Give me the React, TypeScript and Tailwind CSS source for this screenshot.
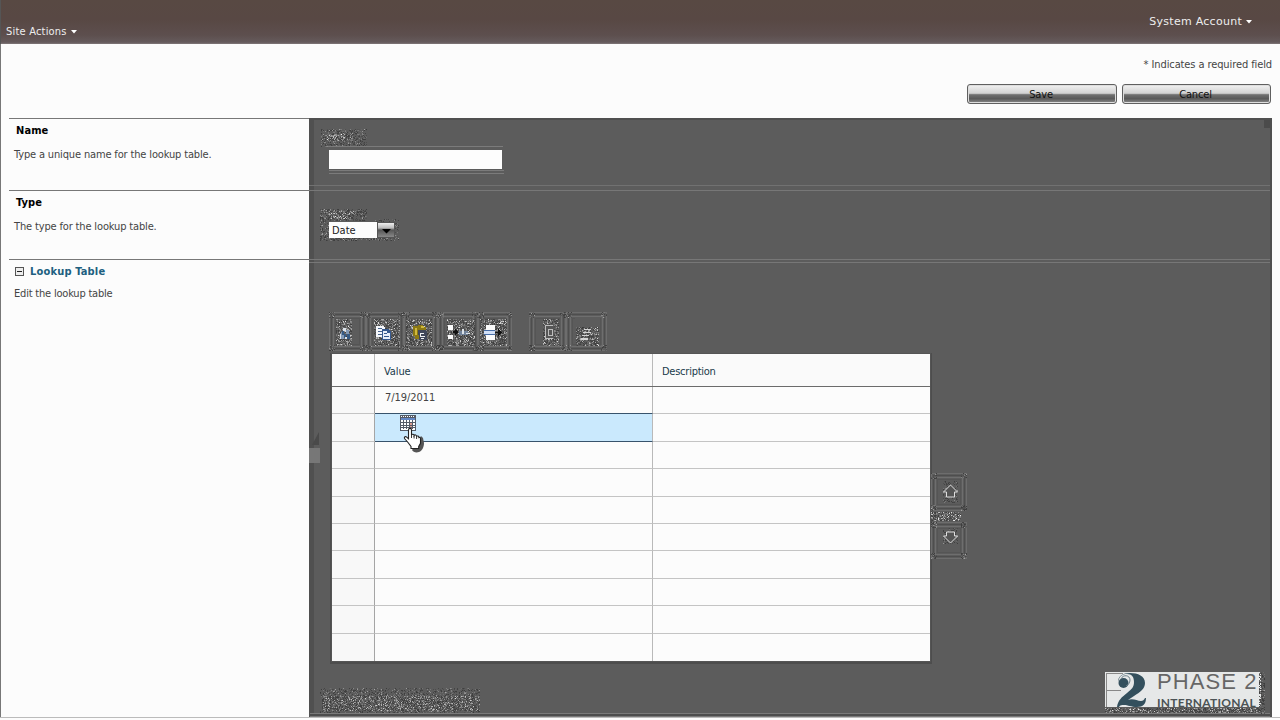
import type { ReactNode } from "react";
import clsx from "clsx";

const ROW_HEIGHTS = [
  "h-[27px]",
  "h-[28px]",
  "h-[27px]",
  "h-[28px]",
  "h-[27px]",
  "h-[27px]",
  "h-[28px]",
  "h-[27px]",
  "h-[28px]",
  "h-[27px]",
];

interface SpeckleProps {
  width: number;
  height: number;
  seed: number;
  density?: number;
  max?: number;
  className?: string;
}

// Grainy patch, same dots on every render
function Speckle({ width, height, seed, density = 0.6, max = 170, className }: SpeckleProps) {
  let s = seed * 7919 + 17;
  const next = () => {
    s = (s * 1103515245 + 12345) % 2147483648;
    return s / 2147483648;
  };
  const dots: ReactNode[] = [];
  for (let y = 0; y < height; y++) {
    for (let x = 0; x < width; x++) {
      if (next() > density) continue;
      const v = Math.round(50 + next() * next() * (max - 50) + 10);
      dots.push(<rect key={`${x}-${y}`} x={x} y={y} width="1" height="1" fill={`rgb(${v},${v},${v})`} />);
    }
  }
  return (
    <svg width={width} height={height} shapeRendering="crispEdges" className={clsx("absolute", className)}>
      {dots}
    </svg>
  );
}

function FrameLines({ w, h }: { w: number; h: number }) {
  return (
    <svg width={w} height={h} className="absolute left-0 top-0" fill="none" shapeRendering="crispEdges">
      <rect x="0.5" y="0.5" width={w - 1} height={h - 1} stroke="#6d6d6d" />
      <rect x="2.5" y="2.5" width={w - 5} height={h - 5} stroke="#4e4e4e" />
      <rect x="4.5" y="4.5" width={w - 9} height={h - 9} stroke="#6e6e6e" />
      <rect x="6.5" y="6.5" width={w - 13} height={h - 13} stroke="#555" />
    </svg>
  );
}

function Corners({ seed }: { seed: number }) {
  return (
    <>
      <Speckle width={6} height={6} seed={seed} className="left-0 top-0" />
      <Speckle width={6} height={6} seed={seed + 1} className="right-0 top-0" />
      <Speckle width={6} height={6} seed={seed + 2} className="bottom-0 left-0" />
      <Speckle width={6} height={6} seed={seed + 3} className="bottom-0 right-0" />
    </>
  );
}

interface ToolButtonProps {
  width: number;
  className: string;
  seed: number;
  grain: string;
  grainWidth: number;
  children: ReactNode;
}

function ToolButton({ width, className, seed, grain, grainWidth, children }: ToolButtonProps) {
  return (
    <button className={clsx("relative h-[39px] shrink-0", className)}>
      <FrameLines w={width} h={39} />
      <Corners seed={seed} />
      <Speckle width={grainWidth} height={27} seed={seed + 5} density={0.8} max={230} className={grain} />
      <svg width={width} height="39" className="absolute -top-px left-0" shapeRendering="crispEdges">
        {children}
      </svg>
    </button>
  );
}

function Toolbar() {
  return (
    <div className="flex h-[39px] pl-[20px]">
      <ToolButton width={37} className="w-[37px]" seed={1} grain="left-[7px] top-[7px]" grainWidth={16}>
        <path d="M12 21h3v7h-3zM17 19h3v4h-3z" fill="#8299b5" />
        <path d="M13 20h2v3h2v4h-2v-3h-2zM18 23h3v5h-3z" fill="#365a83" />
        <path d="M14 17h3v3h-3zM11 23h1v5h-1zM16 26h2v2h-2z" fill="#dce3ea" />
      </ToolButton>
      <ToolButton width={38} className="w-[38px]" seed={11} grain="left-[8px] top-[7px]" grainWidth={26}>
        <path d="M10 15h7l2 2v9h-9z" fill="#f5f7fb" />
        <path d="M12 17h4v1h-4zM12 20h5v1h-5zM12 23h5v1h-5z" fill="#49648c" />
        <path d="M16 18h6l3 3v8h-9z" fill="#36598e" />
        <path d="M17 20h4v2h3v6h-7z" fill="#e6edf8" />
        <path d="M18 22h3v1h-3zM18 25h5v1h-5z" fill="#36598e" />
      </ToolButton>
      <ToolButton width={34} className="w-[34px]" seed={21} grain="left-[2px] top-[7px]" grainWidth={26}>
        <path d="M9 15h5v-1h5v2h3v3h-3v9h-8v-3h-2z" fill="#8b7814" />
        <path d="M11 17h2v7h-2zM17 15h3v2h-3z" fill="#d0b93d" />
        <path d="M14 19h7l2 2v8h-8z" fill="#3f475b" />
        <path d="M16 22h4v1h-3v2h4v1h-5zM17 27h3v1h-3z" fill="#eff2f5" />
      </ToolButton>
      <ToolButton width={40} className="w-[40px]" seed={31} grain="left-[9px] top-[7px]" grainWidth={28}>
        <path d="M10 14h5v5h-5zM10 24h5v4h-5z" fill="#fafafa" />
        <path d="M15 20h2v-2l4 3-4 3v-2h-2z" fill="#111" />
        <path d="M21 20h9v4h-9z" fill="#71839b" />
        <path d="M24 18h2v5h-2zM28 22h4v1h-4z" fill="#dce2e8" />
      </ToolButton>
      <ToolButton width={34} className="w-[34px]" seed={41} grain="left-[2px] top-[7px]" grainWidth={27}>
        <path d="M8 14h9v5H8zM8 24h9v5H8z" fill="#fafafa" />
        <path d="M6 20h11v3H6z" fill="#d2e0f7" />
        <path d="M6 19h11v1H6zM6 23h11v1H6z" fill="#476da6" />
        <path d="M17 21h3v-3l4 3-4 4v-3h-3z" fill="#111" />
      </ToolButton>
      <ToolButton width={37} className="ml-[17px] w-[37px]" seed={51} grain="left-[14px] top-[7px]" grainWidth={16}>
        <path d="M17 15h8v12h-9v-8h1z" fill="#565656" />
        <path d="M16 14h8v1h-8zM16 15h1v13h-1zM16 27h8v1h-8zM19 18h5v1h-5zM19 19h1v6h-1zM23 19h1v6h-1zM19 24h4v1h-4z" fill="#bebebe" />
      </ToolButton>
      <ToolButton width={41} className="w-[41px]" seed={61} grain="left-[10px] top-[7px]" grainWidth={23}>
        <path d="M9 7h25v9H9z" fill="#5c5c5c" />
        <path d="M18 18h7v1h-7zM17 21h8v1h-8zM16 24h7v1h-7zM15 27h7v2h-7z" fill="#d4d4d4" />
      </ToolButton>
    </div>
  );
}

function ValueGrid() {
  return (
    <div className="ml-[23px] flex h-[307px] w-[598px] flex-col bg-[#fcfcfc] shadow-[0_0_0_1px_#555,0_1px_0_2px_#4d4d4d]">
      <div className="flex h-[33px] shrink-0 border-b border-[#6b6b6b] bg-[#fafafa] text-[#203b4b]">
        <div className="w-[43px] border-r border-[#b9b9b9]" />
        <div className="w-[278px] border-r border-[#b9b9b9] pl-[9px] pt-[10px] leading-[16px]">
          <span className="tracking-[-0.1px]">Value</span>
        </div>
        <div className="pl-[9px] pt-[10px] leading-[16px] tracking-[-0.25px]">Description</div>
      </div>
      {ROW_HEIGHTS.map((height, i) => (
        <div key={i} className={clsx("flex shrink-0", height)}>
          <div
            className={clsx("w-[43px] border-r border-r-[#a5a5a5] bg-[#f8f8f8]", i < 9 && "border-b border-b-[#c4c4c4]")}
          />
          <div
            className={clsx(
              "relative w-[278px] border-r border-r-[#b9b9b9]",
              i < 9 && "border-b",
              i < 2 ? "border-b-[#38536c]" : "border-b-[#c4c4c4]",
              i === 1 && "bg-[#cae9fd]"
            )}
          >
            {i === 0 && <span className="block pl-[10px] pt-[3px] leading-[16px] tracking-[-0.05px]">7/19/2011</span>}
            {i === 1 && (
              <>
                <CalendarIcon />
                <HandCursor />
              </>
            )}
          </div>
          <div className={clsx("flex-1", i < 9 && "border-b border-[#c4c4c4]")} />
        </div>
      ))}
    </div>
  );
}

function CalendarIcon() {
  return (
    <svg width="16" height="16" className="absolute left-[25px] top-px" shapeRendering="crispEdges">
      <rect width="16" height="16" fill="#555b66" />
      <path d="M1 1h1v1H1zM3 1h1v1H3zM5 1h1v1H5zM7 1h1v1H7zM9 1h1v1H9zM11 1h1v1h-1zM13 1h1v1h-1z" fill="#fff" />
      <rect x="1" y="3" width="14" height="2" fill="#6488c5" />
      {[5, 8, 11, 13].map((y) =>
        [1, 4, 7, 10, 13].map((x) => (
          <rect key={`${x}-${y}`} x={x} y={y} width="2" height={y > 10 ? 1 : 2} fill={x === 10 && y > 7 ? "#dd9d91" : "#fff"} />
        ))
      )}
      <rect x="1" y="14" width="14" height="1" fill="#fff" />
    </svg>
  );
}

function HandCursor() {
  return (
    <svg width="24" height="28" viewBox="0 0 24 28" className="absolute left-[28px] top-[13px] z-10">
      <path d="M9 23l9-14 2 2 1 5c0 4-2 8-5 9-3 1-6 0-7-2z" fill="#555" />
      <path
        d="M5.500 3c0-2.200 3-2.200 3 0v5c.4-1.200 2.600-.9 2.600.5.600-1 2.500-.6 2.500.8.800-.7 2.300-.2 2.300 1.200.8-.4 1.600.2 1.600 1.300v4.500l-1.800 3.200v2H8v-2L5 15.500l-3.500-4c-.6-1.600 1-2.500 2.200-1.400l1.800 1.700z"
        fill="#fff"
        stroke="#222"
        strokeWidth="1.1"
      />
      <path d="M8.500 8v3M11.100 9v2.500M13.600 10v2" stroke="#222" strokeWidth="0.9" fill="none" />
    </svg>
  );
}

function MoveButtons() {
  return (
    <div className="ml-px mt-[119px] flex w-[36px] flex-col">
      <button className="relative h-[38px]">
        <FrameLines w={36} h={38} />
        <Corners seed={71} />
        <Speckle width={15} height={22} seed={75} density={0.4} className="left-[12px] top-[8px]" />
        <svg width="36" height="38" className="absolute left-0 top-0">
          <path d="M19.500 12l7 7h-3v5h-8v-5h-3z" fill="#555" stroke="#dedede" />
        </svg>
      </button>
      <div className="relative h-[11px]">
        <Speckle width={30} height={9} seed={80} density={0.9} max={255} className="left-0 top-px" />
      </div>
      <button className="relative h-[37px]">
        <FrameLines w={36} h={37} />
        <Corners seed={81} />
        <Speckle width={15} height={16} seed={85} density={0.4} className="left-[12px] top-[6px]" />
        <svg width="36" height="37" className="absolute left-0 top-0">
          <path d="M15.500 10h8v4h3l-7 7-7-7h3z" fill="#555" stroke="#dedede" />
        </svg>
      </button>
    </div>
  );
}

function Brand() {
  return (
    <div className="absolute left-[1105px] top-[672px] flex h-[35px] w-[156px] bg-[#e6e8e8]">
      <svg width="46" height="36" className="shrink-0">
        <path d="M1.500 35V1.500M1 18.500h15M1 1.500h17" stroke="#888" fill="none" />
        <circle cx="18.500" cy="11" r="5" fill="#34505d" />
        <path
          d="M13 10C13 4 18 1 25 1c8 0 15 3 15 10 0 6-5 9-11 13l-6 4c5-2 9 1 13 1 2 0 3-1 4-3h1c0 6-3 9-9 9-6 0-9-2-13-2-2 0-4 0-5 2h-2c1-7 5-10 10-14 5-4 7-6 7-11 0-5-2-8-7-8-4 0-7 2-8 5z"
          fill="#34505d"
        />
        <path d="M16 7c2-5 9-4 9 1 0 3-2 5-4 6" stroke="#6b7e87" fill="none" />
      </svg>
      <Speckle width={6} height={42} seed={90} className="-right-[4px] top-0" />
      <Speckle width={154} height={5} seed={91} density={0.8} max={230} className="left-0 top-[36px]" />
      <div className="relative flex flex-col pl-[6px] font-['Liberation_Sans'] text-[#666]">
        <span className="h-[21px] whitespace-nowrap text-[22px] leading-[20px] tracking-[1.1px]">PHASE 2</span>
        <div className="h-px w-[101px] bg-[#888]" />
        <span className="mt-[4px] whitespace-nowrap font-['Lato'] text-[12px] font-bold leading-[13px] tracking-[0.25px] text-[#4b5355]">
          INTERNATIONAL
        </span>
      </div>
    </div>
  );
}

function Caret() {
  return (
    <svg width="7" height="4" className="ml-[4px]">
      <path d="M0 0h6L3 3.500z" fill="#fff" />
    </svg>
  );
}

function FormButton({ children, className }: { children: ReactNode; className: string }) {
  return (
    <button
      className={clsx(
        "flex h-[20px] items-center justify-center rounded-[3px] border border-[#606060] bg-[linear-gradient(#f2f2f2_0%,#d2d2d2_46%,#707070_54%,#595959_76%,#8c8c8c_100%)] pr-[2px] pt-[2px] text-[#111] shadow-[inset_0_0_0_1px_#dedede]",
        className
      )}
    >
      {children}
    </button>
  );
}

function Section({ title, text, className }: { title: string; text: string; className: string }) {
  return (
    <div className={clsx("ml-[8px] border-t border-[#777] pl-[5px]", className)}>
      <h3 className="pl-[2px] pt-[4px] text-[11px] font-bold leading-[16px] tracking-[0.1px] text-black">{title}</h3>
      <p className="pt-[8px] leading-[16px]">{text}</p>
    </div>
  );
}

export default function App() {
  return (
    <div className="relative flex h-[720px] w-[1280px] flex-col overflow-hidden bg-[#fcfcfc] font-['DejaVu_Sans_Condensed','DejaVu_Sans',sans-serif] text-[11px] tracking-[-0.15px] text-[#444] [font-stretch:condensed]">
      <header className="flex h-[44px] shrink-0 justify-between border-l border-[#555] bg-[linear-gradient(#584943_0%,#584844_45%,#5d4f4e_80%,#655a5c_96%,#81797a_100%)] text-[#eee]">
        <div className="flex items-center self-end pb-[4px] pl-[5px] leading-[16px] tracking-[0.2px]">
          Site Actions
          <Caret />
        </div>
        <div className="flex items-center self-start pr-[27px] pt-[14px] font-['DejaVu_Sans'] leading-[16px] tracking-[0.27px] [font-stretch:normal]">
          System Account
          <Caret />
        </div>
      </header>

      <div className="flex h-[74px] shrink-0 flex-col items-end border-l border-[#777] pr-[9px]">
        <p className="-mr-px mt-[13px] leading-[16px] tracking-[-0.1px]">* Indicates a required field</p>
        <div className="mt-[11px] flex gap-[5px]">
          <FormButton className="w-[150px]">Save</FormButton>
          <FormButton className="w-[149px]">Cancel</FormButton>
        </div>
      </div>

      <main className="flex h-[599px] shrink-0 border-l border-[#777] pr-[8px]">
        <aside className="flex w-[308px] shrink-0 flex-col">
          <Section title="Name" text="Type a unique name for the lookup table." className="h-[72px]" />
          <Section title="Type" text="The type for the lookup table." className="h-[69px]" />
          <div className="ml-[8px] border-t border-[#777] pl-[5px]">
            <h3 className="flex items-center pl-[1px] pt-[4px] text-[11px] font-bold leading-[16px] tracking-[0.17px] text-[#205f80]">
              <svg width="9" height="9" className="-mt-[2px] mr-[6px]" shapeRendering="crispEdges">
                <rect x="0.500" y="0.500" width="8" height="8" fill="#eee" stroke="#555" />
                <path d="M2 4h5v1H2z" fill="#222" />
              </svg>
              Lookup Table
            </h3>
            <p className="pt-[6px] leading-[16px] tracking-[-0.2px]">Edit the lookup table</p>
          </div>
        </aside>

        <div className="relative flex flex-1 flex-col border-l-[5px] border-r-2 border-t-2 border-l-[#505050] border-r-[#505050] border-t-[#505050] bg-[#5c5c5c]">
          <div className="relative -ml-[5px] h-[66px] shrink-0 border-b border-[#717171] pl-[20px] pt-[30px]">
            <Speckle width={46} height={18} seed={101} density={0.5} className="left-[12px] top-[9px]" />
            <Speckle width={26} height={7} seed={102} density={0.9} max={250} className="left-[18px] top-[14px]" />
            <div className="absolute left-[19px] top-[26px] h-px w-[175px] bg-[#7b7b7b]" />
            <input className="block h-[19px] w-[173px] bg-[#fdfdfd] outline-none" />
            <div className="mt-px h-[4px] w-[175px] border-y border-[#7b7b7b]" />
          </div>
          <div className="relative -ml-[5px] mt-[4px] h-[69px] shrink-0 border-t border-[#777] pl-[20px] pt-[31px]">
            <Speckle width={46} height={12} seed={103} density={0.5} className="left-[12px] top-[18px]" />
            <Speckle width={26} height={8} seed={104} density={0.85} max={240} className="left-[19px] top-[20px]" />
            <Speckle width={9} height={32} seed={105} density={0.4} className="left-[11px] top-[18px]" />
            <Speckle width={24} height={22} seed={106} density={0.4} className="left-[66px] top-[28px]" />
            <Speckle width={66} height={3} seed={107} density={0.5} className="left-[18px] top-[47px]" />
            <div className="relative flex h-[16px] w-[66px] bg-[#fdfdfd]">
              <span className="w-[48px] pl-[3px] leading-[17px] tracking-normal text-[#222]">Date</span>
              <span className="flex flex-1 items-center justify-center border border-[#555] bg-[linear-gradient(#eee_0%,#bbb_35%,#555_50%,#888_100%)]">
                <svg width="9" height="5" className="mt-[3px]">
                  <path d="M0 0h9L4.500 4.500z" fill="#000" />
                </svg>
              </span>
            </div>
          </div>
          <div className="-ml-[5px] h-[4px] shrink-0 border-y border-[#777]" />
          <div className="-ml-[5px] mt-[49px]">
            <Toolbar />
            <div className="mt-[3px] flex">
              <ValueGrid />
              <MoveButtons />
            </div>
          </div>
          <Speckle width={160} height={9} seed={110} density={0.4} className="left-[6px] top-[568px]" />
          <Speckle width={158} height={15} seed={111} density={0.85} max={210} className="left-[8px] top-[576px]" />
          <Speckle width={160} height={6} seed={112} density={0.4} className="left-[6px] top-[591px]" />
          <div className="absolute bottom-0 left-[-4px] right-0 h-[4px] border-y border-[#7a7a7a] bg-[#4d4d4d]" />
          <div className="absolute right-0 top-0 h-[8px] w-[6px] bg-[#4b4b4b]" />
          <div className="absolute -left-[5px] top-[328px] h-[15px] w-[11px] bg-[#777]" />
          <svg width="8" height="14" className="absolute -left-[2px] top-[312px]">
            <path d="M7 0v13H0z" fill="#4a4a4a" />
          </svg>
        </div>
      </main>
      <div className="h-px shrink-0 bg-[#bbb]" />
      <Brand />
    </div>
  );
}
